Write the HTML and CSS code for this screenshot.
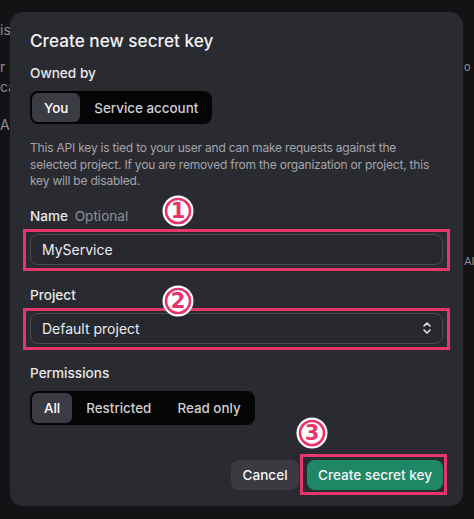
FILE: index.html
```html
<!DOCTYPE html>
<html lang="en">
<head>
<meta charset="utf-8">
<title>Create new secret key</title>
<link rel="stylesheet" href="styles.css">
</head>
<body>
<div class="backdrop">
  <div class="bg-left">
    <p class="bg-l1">is</p>
    <p class="bg-l2">r .</p>
    <p class="bg-l3">ca</p>
    <p class="bg-l4">AF</p>
  </div>
  <div class="bg-right">
    <p class="bg-r1">o</p>
    <p class="bg-r2">AI</p>
  </div>
</div>

<div class="modal">
  <h1 class="title">Create new secret key</h1>
  <div class="label">Owned by</div>
  <div class="seg">
    <span class="seg-item active">You</span>
    <span class="seg-item">Service account</span>
  </div>
  <p class="desc">This API key is tied to your user and can make requests against the selected project. If you are removed from the organization or project, this key will be disabled.</p>

  <div class="label label-name">Name <span class="optional">Optional</span></div>
  <div class="field annotated">MyService</div>

  <div class="label label-project">Project</div>
  <div class="field select annotated">
    <span>Default project</span>
    <svg class="chev" width="10" height="14" viewBox="0 0 10 14" fill="none" stroke="#e6e6ea" stroke-width="1.6" stroke-linecap="round" stroke-linejoin="round"><path d="M2 5 L5 2 L8 5"/><path d="M2 9 L5 12 L8 9"/></svg>
  </div>

  <div class="label label-perm">Permissions</div>
  <div class="seg seg-perm">
    <span class="seg-item active">All</span>
    <span class="seg-item">Restricted</span>
    <span class="seg-item">Read only</span>
  </div>

  <div class="actions">
    <button class="btn btn-cancel">Cancel</button>
    <button class="btn btn-create annotated">Create secret key</button>
  </div>

  <svg class="badge badge-1" width="32" height="32" viewBox="0 0 32 32"><circle cx="16" cy="16" r="15.5" fill="#fff"/><circle cx="16" cy="16" r="12" fill="none" stroke="#e8336b" stroke-width="2.6"/><text x="16" y="23" text-anchor="middle" class="badge-num">1</text></svg>
  <svg class="badge badge-2" width="32" height="32" viewBox="0 0 32 32"><circle cx="16" cy="16" r="15.5" fill="#fff"/><circle cx="16" cy="16" r="12" fill="none" stroke="#e8336b" stroke-width="2.6"/><text x="16" y="23" text-anchor="middle" class="badge-num">2</text></svg>
  <svg class="badge badge-3" width="32" height="32" viewBox="0 0 32 32"><circle cx="16" cy="16" r="15.5" fill="#fff"/><circle cx="16" cy="16" r="12" fill="none" stroke="#e8336b" stroke-width="2.6"/><text x="16" y="23" text-anchor="middle" class="badge-num">3</text></svg>
</div>
</body>
</html>
```

FILE: styles.css
```css
* { box-sizing: border-box; }
html, body {
  margin: 0;
  padding: 0;
  width: 474px;
  height: 519px;
  overflow: hidden;
  background: #131315;
  font-family: Inter, "Noto Sans", "DejaVu Sans", sans-serif;
  color: #ececf1;
}
.backdrop {
  position: relative;
  width: 474px;
  height: 519px;
  display: flex;
  justify-content: space-between;
  color: #8e8e95;
  font-size: 14px;
}
.bg-left { padding-left: 0; }
.bg-left p, .bg-right p { margin: 0; line-height: 18px; white-space: nowrap; }
.bg-l1 { margin-top: 21px !important; }
.bg-l2 { margin-top: 19px !important; }
.bg-l3 { margin-top: 2px !important; }
.bg-l4 { margin-top: 20px !important; }
.bg-right { width: 10px; font-size: 11px; }
.bg-r1 { margin-top: 58px !important; }
.bg-r2 { margin-top: 176px !important; }

.modal {
  position: absolute;
  left: 10px;
  top: 12px;
  width: 453px;
  height: 494px;
  background: #2a2b30;
  border-radius: 13px;
  padding: 17px 20px 16px 20px;
  display: flex;
  flex-direction: column;
}
.title {
  margin: 0;
  font-size: 17.2px;
  line-height: 24px;
  font-weight: 500;
  color: #f1f1f4;
}
.label {
  font-size: 13.6px;
  line-height: 20px;
  font-weight: 500;
  color: #e8e8ec;
  margin-top: 10px;
}
.optional { color: #8f9098; font-weight: 400; margin-left: 3px; }
.label-name { margin-top: 16px; }
.label-project { margin-top: 20px; }
.label-perm { margin-top: 19px; }

.seg {
  margin-top: 8px;
  align-self: flex-start;
  display: flex;
  background: #050505;
  border-radius: 8px;
  padding: 2px;
  height: 33px;
  gap: 2px;
}
.seg-item {
  display: flex;
  align-items: center;
  padding: 0 12px;
  font-size: 13.4px;
  font-weight: 500;
  color: #cfcfd5;
  border-radius: 6px;
}
.seg-item.active { background: #3b3c43; color: #ffffff; }
.seg-perm { height: 34px; }

.desc {
  margin: 16px 0 0 0;
  font-size: 12px;
  letter-spacing: -0.2px;
  line-height: 16.5px;
  color: #a4a4ac;
}

.field {
  margin-top: 8px;
  height: 31px;
  border: 1px solid #4b4c53;
  border-radius: 8px;
  background: #27282d;
  display: flex;
  align-items: center;
  padding: 0 11px;
  font-size: 14px;
  color: #ececf1;
}
.select { justify-content: space-between; padding-right: 10px; }
.chev { display: block; }

.annotated { position: relative; }
.annotated::after {
  content: "";
  position: absolute;
  left: -8px;
  right: -8px;
  top: -6px;
  bottom: -7px;
  border: 3px solid #e5376b;
  pointer-events: none;
}

.actions {
  margin-top: auto;
  display: flex;
  justify-content: flex-end;
  gap: 8px;
}
.btn {
  height: 30px;
  border: none;
  border-radius: 8px;
  font-family: inherit;
  font-size: 13.6px;
  font-weight: 500;
  color: #f4f4f6;
  padding: 0;
  white-space: nowrap;
}
.btn-cancel { background: #3a3b41; width: 68px; }
.btn-create { background: #1f8766; width: 136px; }
.btn-create::after { left: -7px; right: -4px; top: -6px; bottom: -5px; }

.badge { position: absolute; }
.badge-1 { left: 152px; top: 183px; }
.badge-2 { left: 152px; top: 273px; }
.badge-3 { left: 286px; top: 405px; }
.badge-num {
  font-family: "DejaVu Sans", sans-serif;
  font-size: 21px;
  font-weight: 700;
  fill: #e8336b;
  stroke: #fff;
  stroke-width: 1.2px;
  paint-order: stroke;
}
```
